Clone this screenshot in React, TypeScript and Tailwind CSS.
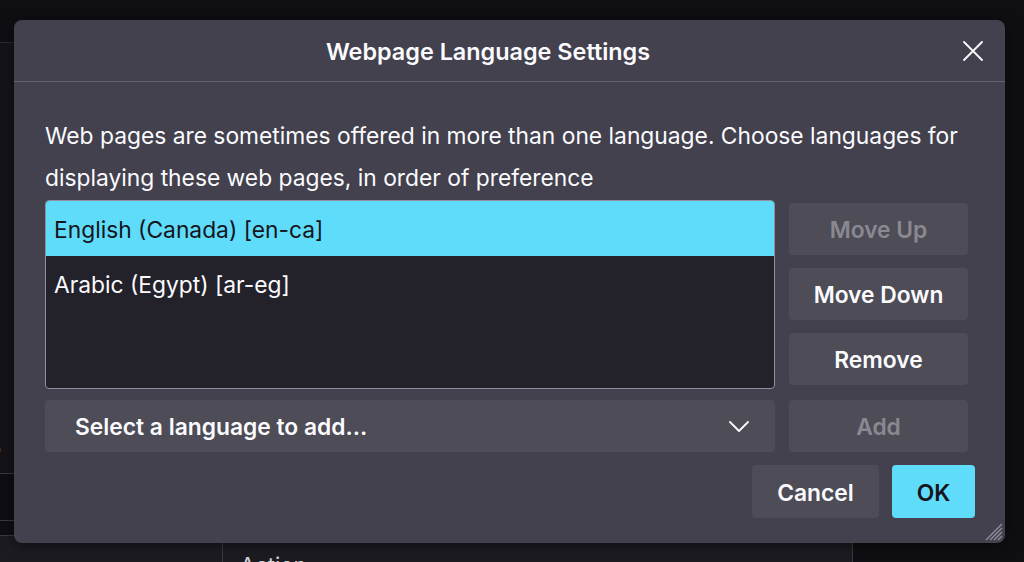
import React from "react";

const font = { fontFamily: "Inter, 'Noto Sans', 'Liberation Sans', sans-serif" };

const SideButton = ({ label, disabled }: { label: string; disabled?: boolean }) => (
  <button
    className={
      "h-[52px] w-[179px] rounded-[4px] bg-[#4d4c57] pt-[3px] text-[22.8px] font-semibold " +
      (disabled ? "text-[#8a8991]" : "text-[#fbfbfe]")
    }
  >
    {label}
  </button>
);

const Backdrop = () => (
  <>
    {/* page behind the dialog */}
    <div className="absolute left-0 top-[42px] h-px w-[40px] bg-[#2a2930]" />
    <div className="absolute left-0 top-[43px] h-[430px] w-[40px] bg-[#141318]" />
    <div className="absolute left-[-24px] top-[432px] text-[22px] text-[#b8b7bd]">yo</div>
    <div className="absolute left-0 top-[473px] h-px w-[40px] bg-[#3a3940]" />
    <div className="absolute left-0 top-[520px] h-px w-[40px] bg-[#3a3940]" />
    <div className="absolute left-0 top-[535px] h-px w-[40px] bg-[#3a3940]" />
    <div className="absolute left-0 top-[536px] h-[26px] w-[852px] bg-[#1c1b22]" />
    <div className="absolute left-[852px] top-[500px] h-[62px] w-px bg-[#3a3940]" />
    <div className="absolute left-[222px] top-[540px] h-[22px] w-px bg-[#3a3940]" />
    <div className="absolute left-[240px] top-[549px] text-[22px] text-[#d0cfd4]">Action</div>
  </>
);

export default function App() {
  return (
    <div className="relative h-[562px] w-[1024px] overflow-hidden bg-[#0f0e12]" style={font}>
      <Backdrop />
      <div className="absolute left-[14px] top-[20px] flex h-[523px] w-[991px] flex-col rounded-[8px] bg-[#42414d] text-[#fbfbfe] shadow-[0_2px_12px_rgba(0,0,0,0.5)]">
        <div className="relative flex h-[62px] shrink-0 items-center justify-center border-b border-[#64636d] pr-[43px]">
          <span className="pt-[2px] text-[23.4px] font-semibold">Webpage Language Settings</span>
          <button className="absolute right-[22px] top-[21px] flex h-[20px] w-[20px] items-center justify-center">
            <svg width="20" height="20" viewBox="0 0 20 20" fill="none" stroke="#fbfbfe" strokeWidth="1.8" strokeLinecap="round">
              <path d="M1 1 L19 19 M19 1 L1 19" />
            </svg>
          </button>
        </div>

        <div className="flex flex-1 flex-col pl-[31px] pr-[30px] pt-[33px]">
          <p className="text-[22.8px] leading-[42px]">
            Web pages are sometimes offered in more than one language. Choose languages for displaying these web pages, in order of preference
          </p>

          <div className="mt-[1px] flex gap-[14px] pr-[7px]">
            <div className="h-[189px] w-[730px] overflow-hidden rounded-[4px] border border-[#8f8f9d] bg-[#23222b] text-[22.8px]">
              <div className="flex h-[55px] items-center bg-[#5fdcfa] pl-[8px] pt-[3px] text-[#15141a]">English (Canada) [en-ca]</div>
              <div className="flex h-[56px] items-center pl-[8px] pt-[3px]">Arabic (Egypt) [ar-eg]</div>
            </div>
            <div className="flex flex-col gap-[13px] pt-[3px]">
              <SideButton label="Move Up" disabled />
              <SideButton label="Move Down" />
              <SideButton label="Remove" />
            </div>
          </div>

          <div className="mt-[11px] flex gap-[14px] pr-[7px]">
            <div className="flex h-[52px] w-[730px] items-center justify-between rounded-[4px] bg-[#4d4c57] pl-[30px] pr-[26px]">
              <span className="pt-[3px] text-[22.8px] font-semibold">Select a language to add...</span>
              <svg width="20" height="11" viewBox="0 0 20 11" fill="none" stroke="#fbfbfe" strokeWidth="1.8" strokeLinecap="round" strokeLinejoin="round">
                <path d="M1 1 L10 10 L19 1" />
              </svg>
            </div>
            <SideButton label="Add" disabled />
          </div>

          <div className="mt-[13px] flex justify-end gap-[13px]">
            <button className="h-[53px] w-[127px] rounded-[4px] bg-[#4d4c57] pt-[3px] text-[22.8px] font-semibold">Cancel</button>
            <button className="h-[53px] w-[83px] rounded-[4px] bg-[#5fdcfa] pt-[3px] text-[22.8px] font-semibold text-[#15141a]">OK</button>
          </div>
        </div>

        <svg className="absolute bottom-[2px] right-[2px]" width="18" height="18" viewBox="0 0 18 18" stroke="#8f8f9d" strokeWidth="1.3">
          <path d="M17 5 L5 17 M17 9 L9 17 M17 13 L13 17 M17 1 L1 17" />
        </svg>
      </div>
    </div>
  );
}
